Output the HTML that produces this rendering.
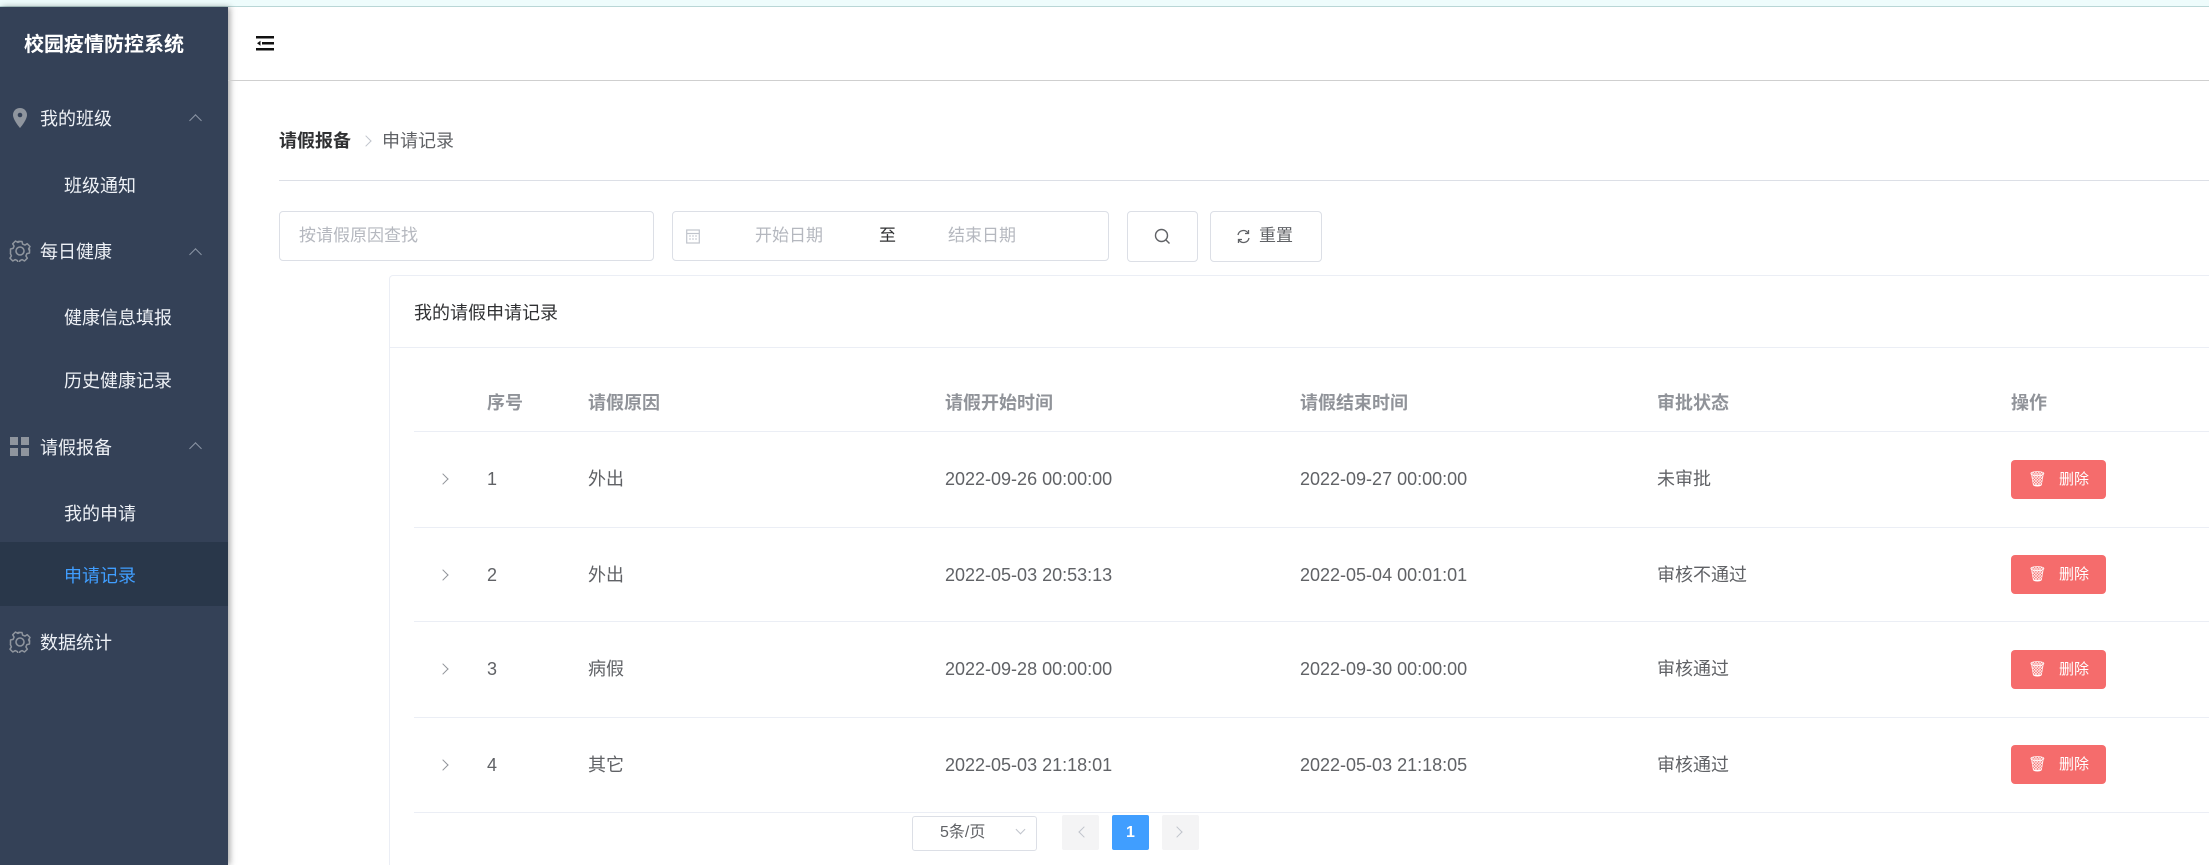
<!DOCTYPE html>
<html><head><meta charset="utf-8"><style>
*{box-sizing:border-box;margin:0;padding:0}
html,body{width:2209px;height:865px;overflow:hidden}
body{background:#fff;font-family:"Liberation Sans","Noto Sans CJK SC",sans-serif;position:relative}
.a{position:absolute;white-space:nowrap;line-height:22px}
#top{left:0;top:0;width:2209px;height:7px;background:#eefcfc;border-bottom:1px solid #b9d6d6}
#side{left:0;top:7px;width:228px;height:858px;background:#344157;box-shadow:2px 0 6px rgba(0,0,0,.35)}
.mi{color:#eef1f6;font-size:18px}
.ar{width:9px;height:9px;border-left:1.5px solid #8c96a6;border-top:1.5px solid #8c96a6;transform:rotate(45deg)}
.th{color:#909399;font-weight:bold;font-size:18px}
.td{color:#606266;font-size:18px}
.hl{height:1px;background:#ebeef5}
.btn{background:#f56c6c;border-radius:4px;color:#fff;font-size:15px;width:95px;height:39px;display:flex;align-items:center;justify-content:center;gap:12px}
.chev{width:8px;height:8px;border-right:1.5px solid #909399;border-top:1.5px solid #909399;transform:rotate(45deg)}
</style></head><body>
<div class="a" id="top"></div>
<div class="a" id="side"></div>
<div class="a" style="left:24px;top:34px;color:#fff;font-weight:bold;font-size:20px">校园疫情防控系统</div>
<div class="a" style="left:0;top:542px;width:228px;height:64px;background:#29374a"></div>

<svg class="a" style="left:12px;top:107px" width="16" height="22" viewBox="0 0 16 22"><path d="M8 1C4 1 1 4 1 8c0 5 7 13 7 13s7-8 7-13c0-4-3-7-7-7z" fill="#8f959e"/><circle cx="8" cy="8" r="2.3" fill="#344157"/></svg>
<div class="a mi" style="left:40px;top:108px">我的班级</div>
<div class="a ar" style="left:191px;top:116px"></div>
<div class="a mi" style="left:64px;top:175px">班级通知</div>

<svg class="a" style="left:9px;top:240px" width="22" height="22" viewBox="0 0 22 22"><circle cx="11" cy="11" r="4" fill="none" stroke="#8f959e" stroke-width="1.6"/><path d="M20.5 9v4l-2.6.6-1 2.3 1.4 2.3-2.8 2.8-2.3-1.4-2.3 1-.6 2.6H9l-.6-2.6-2.3-1-2.3 1.4-2.8-2.8 1.4-2.3-1-2.3L1.5 13V9l2.6-.6 1-2.3-1.4-2.3 2.8-2.8 2.3 1.4 2.3-1L9 1.5h4l.6 2.6 2.3 1 2.3-1.4 2.8 2.8-1.4 2.3 1 2.3z" fill="none" stroke="#8f959e" stroke-width="1.5" stroke-linejoin="round"/></svg>
<div class="a mi" style="left:40px;top:241px">每日健康</div>
<div class="a ar" style="left:191px;top:250px"></div>
<div class="a mi" style="left:64px;top:307px">健康信息填报</div>
<div class="a mi" style="left:64px;top:370px">历史健康记录</div>

<svg class="a" style="left:10px;top:437px" width="19" height="19" viewBox="0 0 19 19"><rect x="0" y="0" width="8" height="8" fill="#8f959e"/><rect x="11" y="0" width="8" height="8" fill="#8f959e"/><rect x="0" y="11" width="8" height="8" fill="#8f959e"/><rect x="11" y="11" width="8" height="8" fill="#8f959e"/></svg>
<div class="a mi" style="left:40px;top:437px">请假报备</div>
<div class="a ar" style="left:191px;top:444px"></div>
<div class="a mi" style="left:64px;top:503px">我的申请</div>
<div class="a mi" style="left:64px;top:565px;color:#409eff">申请记录</div>

<svg class="a" style="left:9px;top:631px" width="22" height="22" viewBox="0 0 22 22"><circle cx="11" cy="11" r="4" fill="none" stroke="#8f959e" stroke-width="1.6"/><path d="M20.5 9v4l-2.6.6-1 2.3 1.4 2.3-2.8 2.8-2.3-1.4-2.3 1-.6 2.6H9l-.6-2.6-2.3-1-2.3 1.4-2.8-2.8 1.4-2.3-1-2.3L1.5 13V9l2.6-.6 1-2.3-1.4-2.3 2.8-2.8 2.3 1.4 2.3-1L9 1.5h4l.6 2.6 2.3 1 2.3-1.4 2.8 2.8-1.4 2.3 1 2.3z" fill="none" stroke="#8f959e" stroke-width="1.5" stroke-linejoin="round"/></svg>
<div class="a mi" style="left:40px;top:632px">数据统计</div>

<div class="a" style="left:228px;top:80px;width:1981px;height:1px;background:#cfcfcf"></div>
<svg class="a" style="left:256px;top:36px" width="18" height="15" viewBox="0 0 18 15"><rect x="0" y="0" width="18" height="2.5" fill="#111"/><rect x="6" y="6" width="12" height="2.5" fill="#111"/><rect x="0" y="12" width="18" height="2.5" fill="#111"/><path d="M1 7.2l3.5-2.5v5z" fill="#111"/></svg>

<div class="a" style="left:279px;top:130px;font-size:18px;color:#303133;font-weight:bold">请假报备</div>
<div class="a" style="left:362px;top:137px;width:8px;height:8px;border-right:1.3px solid #c0c4cc;border-top:1.3px solid #c0c4cc;transform:rotate(45deg)"></div>
<div class="a" style="left:382px;top:130px;font-size:18px;color:#606266">申请记录</div>
<div class="a" style="left:279px;top:180px;width:1930px;height:1px;background:#dcdfe6"></div>

<div class="a" style="left:279px;top:211px;width:375px;height:50px;border:1px solid #dcdfe6;border-radius:4px"></div>
<div class="a" style="left:299px;top:225px;font-size:17px;color:#b5b8bf">按请假原因查找</div>
<div class="a" style="left:672px;top:211px;width:437px;height:50px;border:1px solid #dcdfe6;border-radius:4px"></div>
<svg class="a" style="left:686px;top:228px" width="14" height="16" viewBox="0 0 14 16"><rect x="0.7" y="2" width="12.6" height="13" fill="none" stroke="#c0c4cc" stroke-width="1.2"/><line x1="0.7" y1="5.5" x2="13.3" y2="5.5" stroke="#c0c4cc" stroke-width="1.2"/><path d="M3 8h2M6 8h2M9 8h2M3 11h2M6 11h2M9 11h2" stroke="#c0c4cc"/></svg>
<div class="a" style="left:755px;top:225px;font-size:17px;color:#b5b8bf">开始日期</div>
<div class="a" style="left:879px;top:225px;font-size:17px;color:#303133">至</div>
<div class="a" style="left:948px;top:225px;font-size:17px;color:#b5b8bf">结束日期</div>
<div class="a" style="left:1127px;top:211px;width:71px;height:51px;border:1px solid #dcdfe6;border-radius:4px"></div>
<svg class="a" style="left:1154px;top:228px" width="17" height="17" viewBox="0 0 17 17"><circle cx="7.5" cy="7.5" r="6" fill="none" stroke="#606266" stroke-width="1.4"/><line x1="12" y1="12" x2="15.5" y2="15.5" stroke="#606266" stroke-width="1.4"/></svg>
<div class="a" style="left:1210px;top:211px;width:112px;height:51px;border:1px solid #dcdfe6;border-radius:4px"></div>
<svg class="a" style="left:1236px;top:229px" width="15" height="15" viewBox="0 0 15 15"><path d="M2 6a5.5 5.5 0 0 1 10-2M13 9a5.5 5.5 0 0 1-10 2" fill="none" stroke="#606266" stroke-width="1.3"/><path d="M12.5 1v3.5H9M2.5 14v-3.5H6" fill="none" stroke="#606266" stroke-width="1.3"/></svg>
<div class="a" style="left:1259px;top:225px;font-size:17px;color:#606266">重置</div>

<div class="a" style="left:389px;top:275px;width:1830px;height:590px;border:1px solid #ebeef5;border-bottom:none;border-radius:4px 4px 0 0"></div>
<div class="a" style="left:414px;top:302px;font-size:18px;color:#303133">我的请假申请记录</div>
<div class="a" style="left:390px;top:347px;width:1819px;height:1px;background:#ebeef5"></div>

<div class="a th" style="left:487px;top:392px">序号</div>
<div class="a th" style="left:588px;top:392px">请假原因</div>
<div class="a th" style="left:945px;top:392px">请假开始时间</div>
<div class="a th" style="left:1300px;top:392px">请假结束时间</div>
<div class="a th" style="left:1657px;top:392px">审批状态</div>
<div class="a th" style="left:2011px;top:392px">操作</div>
<div class="a hl" style="left:414px;top:431px;width:1795px"></div>

<div class="a chev" style="left:439px;top:475px"></div>
<div class="a td" style="left:487px;top:468px">1</div><div class="a td" style="left:588px;top:468px">外出</div>
<div class="a td" style="left:945px;top:468px">2022-09-26 00:00:00</div><div class="a td" style="left:1300px;top:468px">2022-09-27 00:00:00</div>
<div class="a td" style="left:1657px;top:468px">未审批</div>
<div class="a btn" style="left:2011px;top:460px"><span>🗑︎</span><span>删除</span></div>
<div class="a hl" style="left:414px;top:527px;width:1795px"></div>

<div class="a chev" style="left:439px;top:571px"></div>
<div class="a td" style="left:487px;top:564px">2</div><div class="a td" style="left:588px;top:564px">外出</div>
<div class="a td" style="left:945px;top:564px">2022-05-03 20:53:13</div><div class="a td" style="left:1300px;top:564px">2022-05-04 00:01:01</div>
<div class="a td" style="left:1657px;top:564px">审核不通过</div>
<div class="a btn" style="left:2011px;top:555px"><span>🗑︎</span><span>删除</span></div>
<div class="a hl" style="left:414px;top:621px;width:1795px"></div>

<div class="a chev" style="left:439px;top:665px"></div>
<div class="a td" style="left:487px;top:658px">3</div><div class="a td" style="left:588px;top:658px">病假</div>
<div class="a td" style="left:945px;top:658px">2022-09-28 00:00:00</div><div class="a td" style="left:1300px;top:658px">2022-09-30 00:00:00</div>
<div class="a td" style="left:1657px;top:658px">审核通过</div>
<div class="a btn" style="left:2011px;top:650px"><span>🗑︎</span><span>删除</span></div>
<div class="a hl" style="left:414px;top:717px;width:1795px"></div>

<div class="a chev" style="left:439px;top:761px"></div>
<div class="a td" style="left:487px;top:754px">4</div><div class="a td" style="left:588px;top:754px">其它</div>
<div class="a td" style="left:945px;top:754px">2022-05-03 21:18:01</div><div class="a td" style="left:1300px;top:754px">2022-05-03 21:18:05</div>
<div class="a td" style="left:1657px;top:754px">审核通过</div>
<div class="a btn" style="left:2011px;top:745px"><span>🗑︎</span><span>删除</span></div>
<div class="a hl" style="left:414px;top:812px;width:1795px"></div>

<div class="a" style="left:912px;top:816px;width:125px;height:35px;border:1px solid #dcdfe6;border-radius:3px"></div>
<div class="a" style="left:940px;top:822px;font-size:16px;color:#606266">5条/页</div>
<div class="a" style="left:1017px;top:826px;width:7px;height:7px;border-right:1.2px solid #c0c4cc;border-bottom:1.2px solid #c0c4cc;transform:rotate(45deg)"></div>
<div class="a" style="left:1062px;top:815px;width:37px;height:35px;background:#f4f4f5;border-radius:2px"></div>
<div class="a" style="left:1080px;top:828px;width:8px;height:8px;border-left:1.5px solid #c0c4cc;border-bottom:1.5px solid #c0c4cc;transform:rotate(45deg)"></div>
<div class="a" style="left:1112px;top:815px;width:37px;height:35px;background:#409eff;border-radius:2px;color:#fff;font-weight:bold;font-size:16px;text-align:center;line-height:35px">1</div>
<div class="a" style="left:1162px;top:815px;width:37px;height:35px;background:#f4f4f5;border-radius:2px"></div>
<div class="a" style="left:1173px;top:828px;width:8px;height:8px;border-right:1.5px solid #c0c4cc;border-top:1.5px solid #c0c4cc;transform:rotate(45deg)"></div>
</body></html>
